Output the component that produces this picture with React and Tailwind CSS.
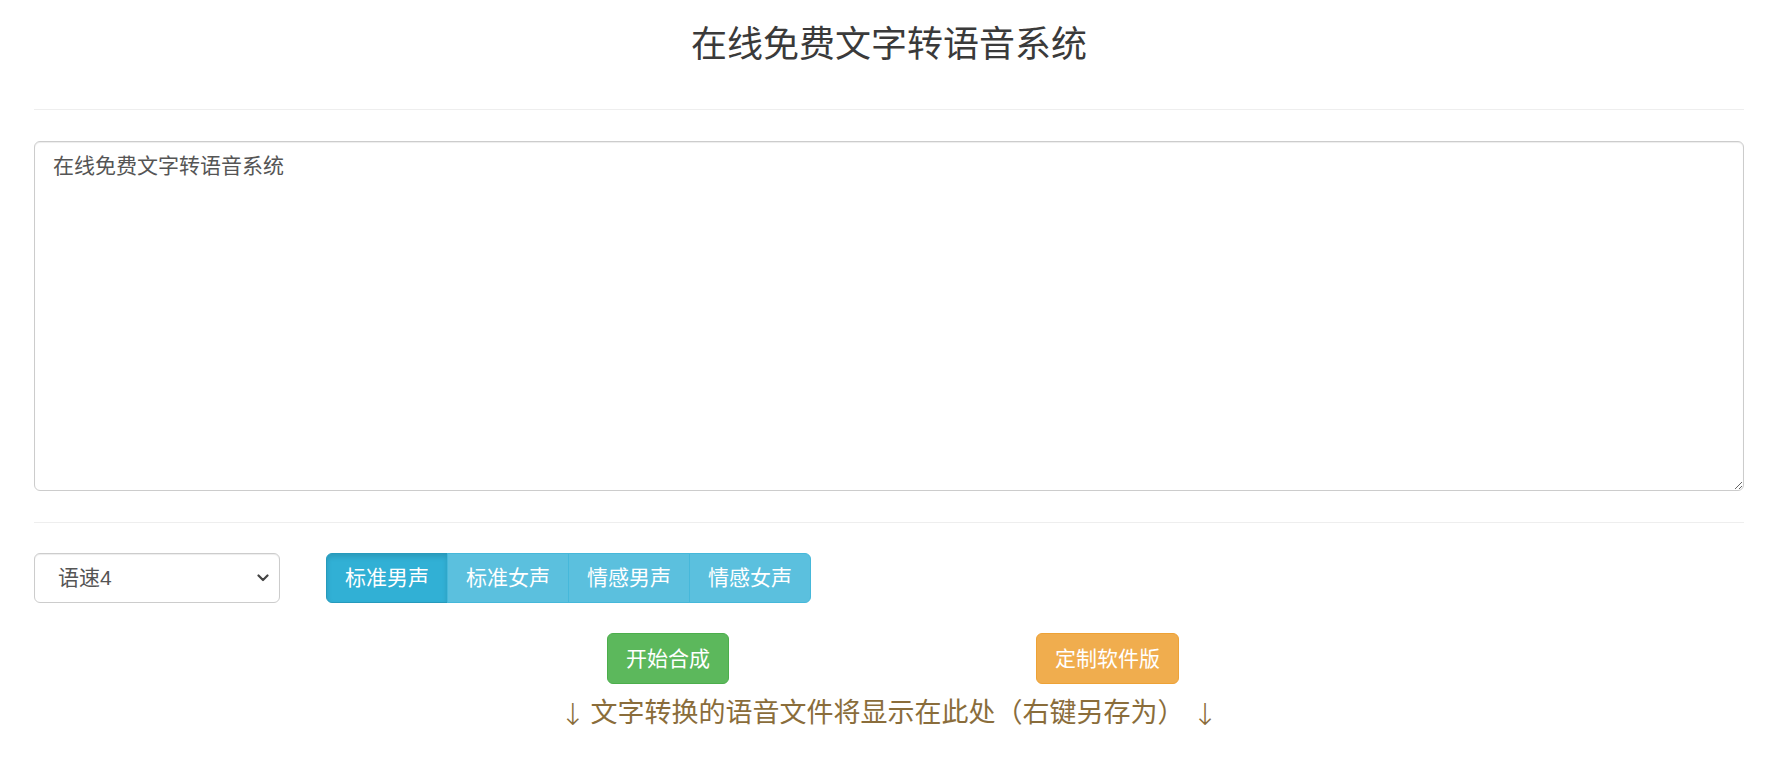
import { useState } from "react";

const voices = ["标准男声", "标准女声", "情感男声", "情感女声"];

export default function App() {
  const [text, setText] = useState("在线免费文字转语音系统");
  const [speed, setSpeed] = useState("4");
  const [voice, setVoice] = useState(0);

  return (
    <div
      className="min-h-screen bg-white pl-[34px] pr-[35px] text-[#333]"
      style={{ fontFamily: '"Liberation Sans", "Noto Sans CJK SC", sans-serif' }}
    >
      {/* 标题 */}
      <h3 className="pt-[25px] text-center text-[36px] leading-[40px] font-normal text-[#3a3a3a]">
        在线免费文字转语音系统
      </h3>

      <hr className="mt-[44px] border-t border-[#eee]" />

      {/* 文本输入 */}
      <textarea
        value={text}
        onChange={(e) => setText(e.target.value)}
        className="mt-[31px] block h-[350px] w-full rounded-[6px] border border-[#ccc] px-[18px] py-[9px] text-[21px] leading-[30px] text-[#555] shadow-[inset_0_1px_1px_rgba(0,0,0,0.075)] outline-none focus:border-[#66afe9]"
      />

      <hr className="mt-[31px] border-t border-[#eee]" />

      {/* 语速 + 发音人 */}
      <div className="mt-[30px] flex items-center gap-[46px]">
        <div className="relative">
          <select
            value={speed}
            onChange={(e) => setSpeed(e.target.value)}
            className="h-[50px] w-[246px] appearance-none rounded-[6px] border border-[#ccc] bg-white pl-[23px] pr-[30px] text-[21px] text-[#555] shadow-[inset_0_1px_1px_rgba(0,0,0,0.075)] outline-none"
          >
            {[1, 2, 3, 4, 5, 6, 7, 8, 9].map((n) => (
              <option key={n} value={String(n)}>
                语速{n}
              </option>
            ))}
          </select>
          <svg
            className="pointer-events-none absolute right-[11px] top-1/2 -translate-y-1/2"
            width="12"
            height="8"
            viewBox="0 0 12 8"
          >
            <path d="M1.5 1.5 L6 6 L10.5 1.5" fill="none" stroke="#444" strokeWidth="2.2" strokeLinecap="round" strokeLinejoin="round" />
          </svg>
        </div>

        <div className="flex">
          {voices.map((v, i) => (
            <button
              key={v}
              type="button"
              onClick={() => setVoice(i)}
              className={`-ml-px h-[50px] border px-[18px] text-[21px] leading-[30px] text-white first:ml-0 first:rounded-l-[6px] last:rounded-r-[6px] ${
                voice === i
                  ? "border-[#269abc] bg-[#31b0d5] shadow-[inset_0_3px_5px_rgba(0,0,0,0.125)]"
                  : "border-[#46b8da] bg-[#5bc0de]"
              }`}
            >
              {v}
            </button>
          ))}
        </div>
      </div>

      {/* 操作按钮 */}
      <div className="mt-[30px] flex justify-center gap-[307px] pl-[8px]">
        <button
          type="button"
          className="h-[51px] rounded-[6px] border border-[#4cae4c] bg-[#5cb85c] px-[18px] text-[21px] text-white"
        >
          开始合成
        </button>
        <button
          type="button"
          className="h-[51px] rounded-[6px] border border-[#eea236] bg-[#f0ad4e] px-[18px] text-[21px] text-white"
        >
          定制软件版
        </button>
      </div>

      {/* 提示 */}
      <h4 className="mt-[12px] text-center text-[27px] leading-[32px] font-normal text-[#8a6d3b]">
        <span className="inline-block translate-y-[3px] pr-[5px] text-[30px] font-light" style={{ fontFamily: '"DejaVu Sans", sans-serif' }}>↓</span>
        文字转换的语音文件将显示在此处（右键另存为）
        <span className="inline-block translate-y-[3px] pl-[8px] text-[30px] font-light" style={{ fontFamily: '"DejaVu Sans", sans-serif' }}>↓</span>
      </h4>
    </div>
  );
}
